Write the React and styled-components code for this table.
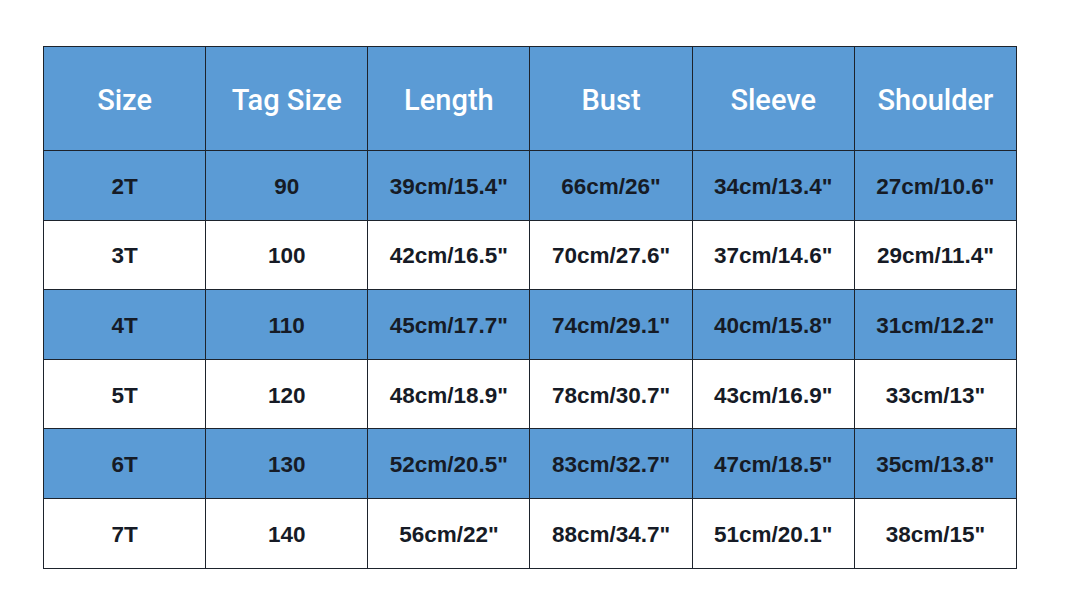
import styled, { createGlobalStyle } from 'styled-components';

const GlobalStyle = createGlobalStyle`
	html, body {
		margin: 0;
		padding: 0;
		background: #fff;
	}
`;

const Page = styled.div`
	width: 1066px;
	height: 611px;
	padding: 46px 0 0 43px;
	box-sizing: border-box;
	background: #fff;
`;

const Table = styled.table`
	border-collapse: collapse;
	width: 974px;
	table-layout: fixed;
	border: 1.5px solid #1d232c;
`;

const HeadCell = styled.th`
	height: 101px;
	padding: 2px 0 0;
	background: #5b9bd5;
	color: #fff;
	font-family: Roboto, 'Liberation Sans', sans-serif;
	font-weight: 500;
	font-size: 29px;
	text-align: center;
	border: 1.5px solid #1d232c;
`;

const Cell = styled.td`
	height: 65.6px;
	padding: 3px 0 0;
	background: ${(p) => (p.$blue ? '#5b9bd5' : '#fff')};
	color: #161b26;
	font-family: 'Liberation Sans', Arial, sans-serif;
	font-weight: bold;
	font-size: 22.5px;
	text-align: center;
	border: 1.5px solid #1d232c;
`;

const headers = ['Size', 'Tag Size', 'Length', 'Bust', 'Sleeve', 'Shoulder'];

const rows = [
	['2T', '90', '39cm/15.4"', '66cm/26"', '34cm/13.4"', '27cm/10.6"'],
	['3T', '100', '42cm/16.5"', '70cm/27.6"', '37cm/14.6"', '29cm/11.4"'],
	['4T', '110', '45cm/17.7"', '74cm/29.1"', '40cm/15.8"', '31cm/12.2"'],
	['5T', '120', '48cm/18.9"', '78cm/30.7"', '43cm/16.9"', '33cm/13"'],
	['6T', '130', '52cm/20.5"', '83cm/32.7"', '47cm/18.5"', '35cm/13.8"'],
	['7T', '140', '56cm/22"', '88cm/34.7"', '51cm/20.1"', '38cm/15"']
];

const App = () => {
	return (
		<Page>
			<GlobalStyle />
			<Table>
				<thead>
					<tr>
						{headers.map((h) => (
							<HeadCell key={h}>{h}</HeadCell>
						))}
					</tr>
				</thead>
				<tbody>
					{rows.map((row, i) => (
						<tr key={row[0]}>
							{row.map((v, j) => (
								<Cell key={j} $blue={i % 2 === 0}>
									{v}
								</Cell>
							))}
						</tr>
					))}
				</tbody>
			</Table>
		</Page>
	);
};

export default App;
